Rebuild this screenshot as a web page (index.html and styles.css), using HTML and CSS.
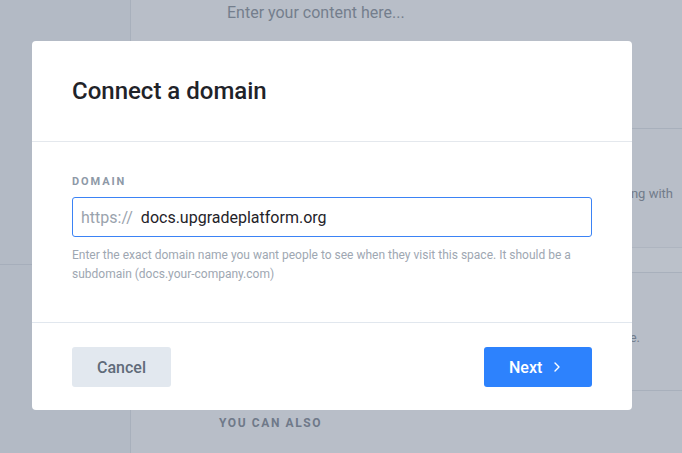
FILE: index.html
```html
<!DOCTYPE html>
<html>
<head>
<meta charset="utf-8">
<link rel="stylesheet" href="styles.css">
</head>
<body>
<div class="app">
  <aside class="sidebar">
    <div class="side-top"></div>
    <div class="side-bottom"></div>
  </aside>
  <main class="main">
    <div class="editor">Enter your content here...</div>
    <div class="card card-one"><p>Start by importing existing content or collaborating with</p></div>
    <div class="strip"></div>
    <div class="card card-two"><p>Invite your team to write together in this space.</p></div>
    <div class="also">YOU CAN ALSO</div>
  </main>
</div>

<div class="modal">
  <div class="modal-header">
    <h1 class="modal-title">Connect a domain</h1>
  </div>
  <div class="modal-body">
    <label class="field-label">DOMAIN</label>
    <div class="input">
      <span class="prefix">https://</span>
      <span class="value">docs.upgradeplatform.org</span>
    </div>
    <p class="help">Enter the exact domain name you want people to see when they visit this space. It should be a subdomain (docs.your-company.com)</p>
  </div>
  <div class="modal-footer">
    <button class="btn btn-cancel">Cancel</button>
    <button class="btn btn-next">Next
      <svg class="chev" width="8" height="12" viewBox="0 0 8 12"><path d="M2 2 L6 6 L2 10" fill="none" stroke="#fff" stroke-width="1.4" stroke-linecap="round" stroke-linejoin="round"/></svg>
    </button>
  </div>
</div>
</body>
</html>
```
FILE: styles.css
```css
* { box-sizing: border-box; }
html, body { margin: 0; padding: 0; }
body {
  width: 682px;
  height: 453px;
  overflow: hidden;
  font-family: Roboto, "Liberation Sans", sans-serif;
  background: #b8bec8;
  position: relative;
}
.app {
  display: flex;
  height: 453px;
}
.sidebar {
  width: 131px;
  flex: none;
  background: #b3bac5;
  border-right: 1px solid #a8b0bc;
  display: flex;
  flex-direction: column;
}
.side-top {
  height: 265px;
  border-bottom: 1px solid #a6aebb;
}
.main {
  flex: 1;
  display: flex;
  flex-direction: column;
  background: #b8bec8;
  min-width: 0;
}
.editor {
  padding-left: 96px;
  height: 128px;
  padding-top: 3px;
  font-size: 16px;
  line-height: 20px;
  color: #747e8d;
}
.card {
  border-top: 1px solid #a8b0bc;
  background: #b8bec8;
  display: flex;
  justify-content: flex-end;
  margin-left: 60px;
}
.card p {
  margin: 0;
  font-size: 13px;
  white-space: nowrap;
  color: #727c8b;
}
.card-one {
  height: 120px;
  padding: 57px 9px 0 0;
  border-bottom: 1px solid #aeb5c0;
}
.card-two {
  height: 119px;
  padding: 57px 42px 0 0;
  border-bottom: 1px solid #a8b0bc;
}
.strip {
  height: 24px;
  background: #bbc1ca;
  margin-left: 60px;
}
.also {
  padding: 25px 0 0 88px;
  font-size: 12px;
  font-weight: 700;
  letter-spacing: 1.6px;
  color: #6f7989;
}

.modal {
  position: absolute;
  left: 32px;
  top: 41px;
  width: 600px;
  background: #fff;
  border-radius: 4px;
  display: flex;
  flex-direction: column;
}
.modal-header {
  height: 101px;
  padding: 35px 40px 0;
  border-bottom: 1px solid #e4e8ed;
}
.modal-title {
  margin: 0;
  font-size: 24px;
  font-weight: 500;
  line-height: 30px;
  color: #1f2329;
}
.modal-body {
  height: 181px;
  padding: 33px 40px 0;
  border-bottom: 1px solid #e1e7ee;
  display: flex;
  flex-direction: column;
}
.field-label {
  font-size: 11px;
  font-weight: 700;
  letter-spacing: 1.9px;
  line-height: 14px;
  color: #8e99a7;
  margin-bottom: 8px;
}
.input {
  height: 40px;
  border: 1px solid #3b83f5;
  border-radius: 3px;
  display: flex;
  align-items: center;
  padding-left: 8px;
  font-size: 16px;
}
.prefix {
  color: #9aa3ad;
  margin-right: 8px;
}
.value {
  color: #1f2329;
}
.help {
  margin: 9px 0 0;
  font-size: 12px;
  line-height: 19px;
  color: #9ea7b2;
}
.modal-footer {
  height: 87px;
  padding: 24px 40px 0;
  display: flex;
  justify-content: space-between;
  align-items: flex-start;
}
.btn {
  height: 40px;
  border: none;
  border-radius: 3px;
  font-family: Roboto, "Liberation Sans", sans-serif;
  font-size: 16px;
  font-weight: 500;
  display: flex;
  align-items: center;
  padding: 0;
}
.btn-cancel {
  width: 99px;
  justify-content: center;
  background: #e2e8ef;
  color: #606b79;
}
.btn-next {
  width: 108px;
  justify-content: flex-start;
  background: #2d82fd;
  color: #fff;
  gap: 11px;
  padding-left: 25px;
}
.chev { display: block; }
```
